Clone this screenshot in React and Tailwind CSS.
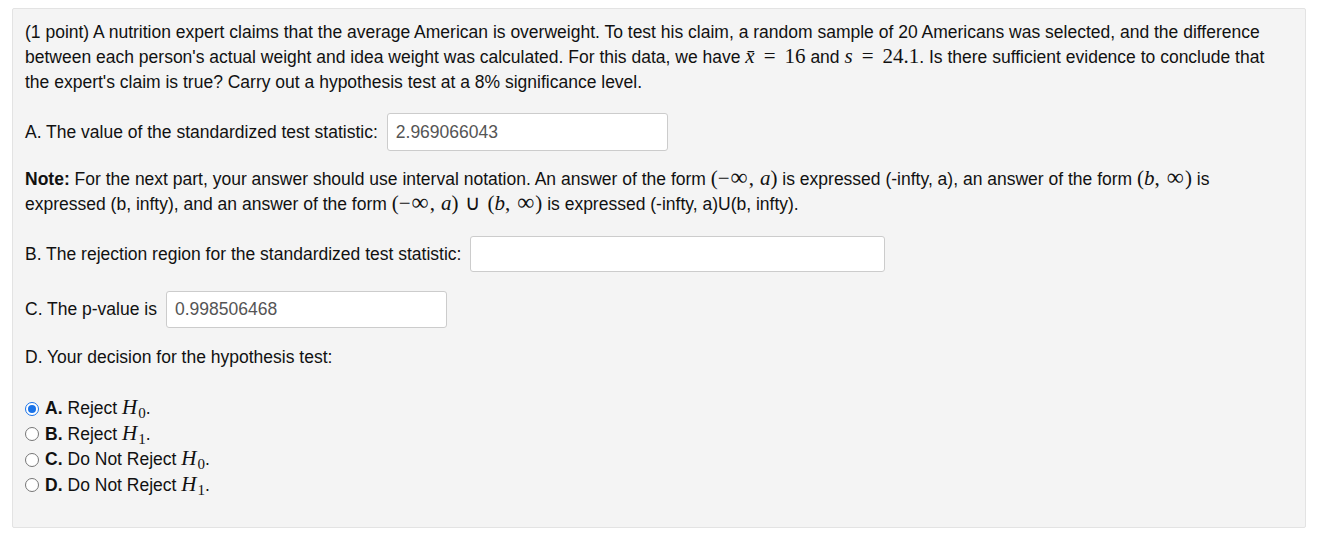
import React from "react";

const M = ({ children, className = "" }) => (
  <span
    className={`inline-block h-[20px] leading-[20px] font-['Liberation_Serif',serif] text-[21px] ${className}`}
  >
    {children}
  </span>
);
const I = ({ children }) => <i className="font-['Liberation_Serif',serif]">{children}</i>;
const Op = ({ children, w = "mx-[7px]" }) => <span className={w}>{children}</span>;
const Inf = () => <span className="text-[24px] mx-[1px]">&infin;</span>;
const Comma = () => <span className="mr-[6px]">,</span>;

const H = ({ n }) => (
  <M>
    <I>H</I>
    <span className="text-[15px] relative top-[4px] ml-[1px]">{n}</span>
  </M>
);

const Radio = ({ checked, letter, children }) => (
  <label className="flex items-center h-[25.5px]">
    <span
      className={`w-[14px] h-[14px] rounded-full mr-[6px] flex items-center justify-center ${
        checked ? "border border-[#1a73e8] bg-white" : "border border-[#767676] bg-white"
      }`}
    >
      {checked && <span className="w-[8px] h-[8px] rounded-full bg-[#1a73e8]" />}
    </span>
    <b className="font-bold mr-[5px]">{letter}.</b>
    <span>{children}</span>
  </label>
);

export default function App() {
  return (
    <div className="w-[1323px] h-[540px] bg-white pt-[8px] pl-[12px] font-['Liberation_Sans',Arial,sans-serif] text-[17.5px] text-[#111] leading-[25px]">
      <div className="w-[1294px] h-[520px] bg-[#f4f4f4] border border-[#e3e3e3] rounded-[2px] pl-[12px] pr-[12px] pt-[11px]">
        <p>
          (1 point) A nutrition expert claims that the average American is overweight. To test his claim, a random
          sample of 20 Americans was selected, and the difference between each person's actual weight and idea weight
          was calculated. For this data, we have{" "}
          <M>
            <I>x&#772;</I>
            <Op w="mx-[9px]">=</Op>16
          </M>{" "}
          and{" "}
          <M>
            <I>s</I>
            <Op w="mx-[9px]">=</Op>24.1
          </M>
          . Is there sufficient evidence to conclude that the expert's claim is true? Carry out a hypothesis test at a
          8% significance level.
        </p>

        <div className="flex items-center mt-[18px] h-[38px]">
          <span>A. The value of the standardized test statistic:</span>
          <div className="ml-[9px] w-[281px] h-[38px] bg-white border border-[#cccccc] rounded-[3px] pl-[8px] flex items-center text-[#555]">
            2.969066043
          </div>
        </div>

        <p className="mt-[16px]">
          <b>Note:</b> For the next part, your answer should use interval notation. An answer of the form{" "}
          <M>
            (&minus;<Inf />
            <Comma />
            <I>a</I>)
          </M>{" "}
          is expressed (-infty, a), an answer of the form{" "}
          <M>
            (<I>b</I>
            <Comma />
            <Inf />)
          </M>{" "}
          is expressed (b, infty), and an answer of the form{" "}
          <M>
            (&minus;<Inf />
            <Comma />
            <I>a</I>)<Op>&cup;</Op>(<I>b</I>
            <Comma />
            <Inf />)
          </M>{" "}
          is expressed (-infty, a)U(b, infty).
        </p>

        <div className="flex items-center mt-[19px] h-[36px]">
          <span>B. The rejection region for the standardized test statistic:</span>
          <div className="ml-[9px] w-[415px] h-[36px] bg-white border border-[#cccccc] rounded-[3px]" />
        </div>

        <div className="flex items-center mt-[19px] h-[37px]">
          <span>C. The p-value is</span>
          <div className="ml-[9px] w-[281px] h-[37px] bg-white border border-[#cccccc] rounded-[3px] pl-[8px] flex items-center text-[#555]">
            0.998506468
          </div>
        </div>

        <p className="mt-[17px]">D. Your decision for the hypothesis test:</p>

        <div className="mt-[26px] flex flex-col">
          <Radio checked letter="A">
            Reject <H n="0" />.
          </Radio>
          <Radio letter="B">
            Reject <H n="1" />.
          </Radio>
          <Radio letter="C">
            Do Not Reject <H n="0" />.
          </Radio>
          <Radio letter="D">
            Do Not Reject <H n="1" />.
          </Radio>
        </div>
      </div>
    </div>
  );
}
